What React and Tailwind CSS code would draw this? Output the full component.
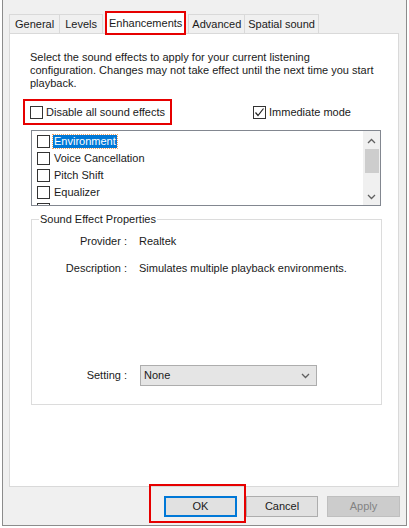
import React from "react";

const Check = ({ checked }) => (
  <span className="w-[13px] h-[13px] border border-[#333] bg-white shrink-0 flex items-center justify-center">
    {checked && (
      <svg width="11" height="11" viewBox="0 0 11 11">
        <path d="M1.5 5.5 L4 8.5 L9.5 1.5" fill="none" stroke="#222" strokeWidth="1.2" />
      </svg>
    )}
  </span>
);

const Chevron = ({ up, className }) => (
  <svg width="9" height="6" viewBox="0 0 9 6" className={className}>
    <path d={up ? "M1 5 L4.5 1.5 L8 5" : "M1 1 L4.5 4.5 L8 1"} fill="none" stroke="#606060" strokeWidth="1.3" />
  </svg>
);

const effects = ["Environment", "Voice Cancellation", "Pitch Shift", "Equalizer", ""];

export default function App() {
  return (
    <div className="w-[409px] h-[528px] bg-white px-[2px] pb-[2px] flex flex-col text-[11px] leading-[13px] text-[#1a1a1a] font-['Liberation_Sans',Arial,sans-serif]">
      <div className="flex-1 flex flex-col bg-[#f0f0f0] border-l border-r border-b border-[#8c8c8c] pt-[11px] pl-[6px] pr-[6px]">
        {/* Tabs */}
        <div className="flex items-end h-[22px]">
          <div className="h-[19px] px-[5px] flex items-center border border-b-0 border-[#d9d9d9] bg-[#f0f0f0]">General</div>
          <div className="h-[19px] px-[5px] flex items-center border border-b-0 border-l-0 border-[#d9d9d9] bg-[#f0f0f0]">Levels</div>
          <div className="h-[24px] -mb-[2px] z-10 px-[2px] ml-[2px] flex items-center bg-white border-2 border-[#e60000]">Enhancements</div>
          <div className="h-[19px] px-[3px] ml-[2px] flex items-center border border-b-0 border-[#d9d9d9] bg-[#f0f0f0]">Advanced</div>
          <div className="h-[19px] px-[3px] flex items-center border border-b-0 border-l-0 border-[#d9d9d9] bg-[#f0f0f0]">Spatial sound</div>
        </div>

        {/* Panel */}
        <div className="h-[454px] w-[390px] bg-white border border-[#d9d9d9] flex flex-col pl-[13px] pt-[17px]">
          <p className="pl-[7px] whitespace-nowrap">
            Select the sound effects to apply for your current listening
            <br />
            configuration. Changes may not take effect until the next time you start
            <br />
            playback.
          </p>

          <div className="flex items-center mt-[9px]">
            <div className="w-[149px] h-[26px] border-2 border-[#e60000] flex items-center gap-[3px] pl-[5px] whitespace-nowrap">
              <Check />
              <span>Disable all sound effects</span>
            </div>
            <div className="flex items-center gap-[3px] ml-[81px]">
              <Check checked />
              <span>Immediate mode</span>
            </div>
          </div>

          {/* Effects list */}
          <div className="ml-[8px] mt-[5px] w-[350px] h-[76px] border border-[#828790] flex overflow-hidden">
            <div className="flex-1 pt-[2px] pl-[5px]">
              {effects.map((e, i) => (
                <div key={i} className="h-[17px] flex items-center gap-[3px]">
                  <Check />
                  {e && (
                    <span className={i === 0 ? "bg-[#0078d7] text-white px-[1px] outline-1 outline-dotted outline-[#f0a060]" : "px-[1px]"}>{e}</span>
                  )}
                </div>
              ))}
            </div>
            <div className="w-[17px] bg-[#f0f0f0] flex flex-col items-center pt-[7px] pb-[5px]">
              <Chevron up />
              <div className="w-[14px] h-[24px] bg-[#cdcdcd] mt-[5px]" />
              <div className="flex-1" />
              <Chevron />
            </div>
          </div>

          {/* Sound Effect Properties */}
          <fieldset className="ml-[8px] mt-[7px] w-[351px] border border-[#dcdcdc] pl-[7px] pb-[18px]">
            <legend className="px-[1px] text-[#1a1a1a]">Sound Effect Properties</legend>
            <div className="flex mt-[9px]">
              <span className="w-[88px] text-right">Provider :</span>
              <span className="ml-[12px]">Realtek</span>
            </div>
            <div className="flex mt-[14px]">
              <span className="w-[88px] text-right">Description :</span>
              <span className="ml-[12px]">Simulates multiple playback environments.</span>
            </div>
            <div className="flex items-center mt-[90px]">
              <span className="w-[88px] text-right">Setting :</span>
              <div className="ml-[13px] w-[177px] h-[21px] bg-[#e5e5e5] border border-[#adadad] flex items-center pl-[3px] pr-[6px]">
                <span className="flex-1">None</span>
                <Chevron />
              </div>
            </div>
          </fieldset>
        </div>

        {/* Buttons */}
        <div className="flex justify-end items-center gap-[9px] mt-[9px]">
          <div className="relative">
            <div className="absolute -left-[15px] -right-[9px] -top-[12px] -bottom-[6px] border-2 border-[#e60000]" />
            <button className="w-[73px] h-[21px] bg-[#e1e1e1] border-2 border-[#0078d7] flex items-center justify-center">OK</button>
          </div>
          <button className="w-[72px] h-[21px] bg-[#e1e1e1] border border-[#adadad] flex items-center justify-center">Cancel</button>
          <button className="w-[73px] h-[21px] bg-[#cccccc] border border-[#bfbfbf] text-[#838383] flex items-center justify-center">Apply</button>
        </div>
      </div>
    </div>
  );
}
